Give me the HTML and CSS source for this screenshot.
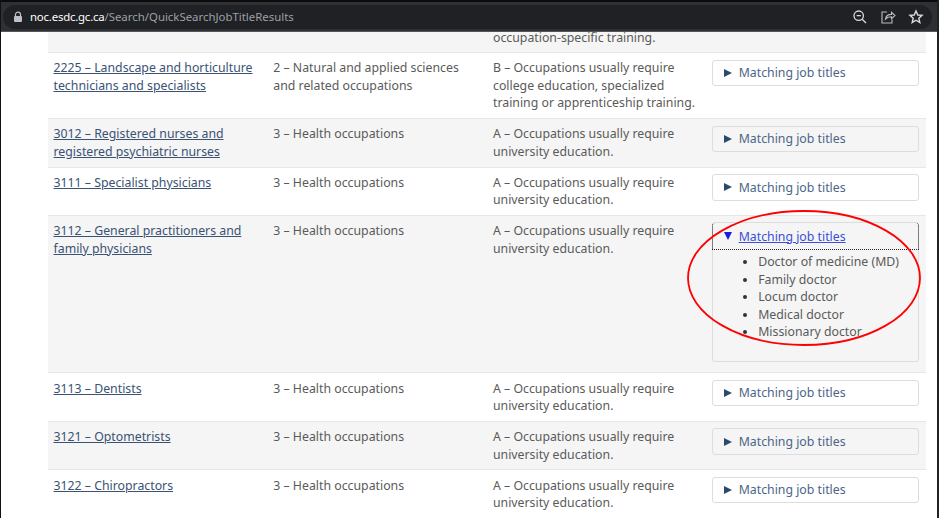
FILE: index.html
```html
<!DOCTYPE html>
<html lang="en">
<head>
<meta charset="utf-8">
<title>Quick search job title results</title>
<link rel="stylesheet" href="styles.css">
</head>
<body>
<div class="frame">
  <header class="bar">
    <div class="omnibox">
      <svg class="lock" width="10" height="12" viewBox="0 0 10 12"><path d="M2.5 5V3.6a2.5 2.5 0 0 1 5 0V5" fill="none" stroke="#bdc1c6" stroke-width="1.2"/><rect x="1" y="5" width="8" height="6" rx="1" fill="#bdc1c6"/></svg>
      <div class="url"><b>noc.esdc.gc.ca</b>/Search/QuickSearchJobTitleResults</div>
      <div class="tools">
        <svg width="16" height="16" viewBox="0 0 16 16" fill="none" stroke="#dadce0" stroke-width="1.3"><circle cx="6.7" cy="6.700" r="4.700"/><path d="M10.200 10.200 14 14M4.600 6.700h4.200"/></svg>
        <svg width="16" height="16" viewBox="0 0 16 16" fill="none" stroke="#b9bcc0" stroke-width="1.100"><path d="M7 3H2v11h10v-3.500"/><path d="M5.500 10c.5-3 2.700-4.600 6-4.600V3.300L15 6.500l-3.500 3.200V7.700c-2.500 0-4.500.7-6 2.300z"/></svg>
        <svg width="16" height="16" viewBox="0 0 16 16" fill="none" stroke="#dadce0" stroke-width="1.400"><path d="m8 2 1.800 4 4.200.4-3.200 2.800 1 4.300L8 11.200l-3.800 2.300 1-4.300L2 6.400 6.200 6z"/></svg>
      </div>
    </div>
  </header>
  <main class="table">
    <div class="row shade clip"><div></div><div></div><div class="cut">occupation-specific training.</div><div></div></div>

    <div class="row">
      <a href="#">2225 – Landscape and horticulture technicians and specialists</a>
      <div>2 – Natural and applied sciences and related occupations</div>
      <div>B – Occupations usually require college education, specialized training or apprenticeship training.</div>
      <div class="box"><span class="tri"></span><span class="sum">Matching job titles</span></div>
    </div>
    <div class="row shade">
      <a href="#">3012 – Registered nurses and registered psychiatric nurses</a>
      <div>3 – Health occupations</div>
      <div>A – Occupations usually require university education.</div>
      <div class="box"><span class="tri"></span><span class="sum">Matching job titles</span></div>
    </div>
    <div class="row">
      <a href="#">3111 – Specialist physicians</a>
      <div>3 – Health occupations</div>
      <div>A – Occupations usually require university education.</div>
      <div class="box"><span class="tri"></span><span class="sum">Matching job titles</span></div>
    </div>
    <div class="row shade">
      <a href="#">3112 – General practitioners and family physicians</a>
      <div>3 – Health occupations</div>
      <div>A – Occupations usually require university education.</div>
      <div class="box open">
        <div class="head"><span class="tri down"></span><a href="#" class="sum active">Matching job titles</a></div>
        <ul>
          <li>Doctor of medicine (MD)</li>
          <li>Family doctor</li>
          <li>Locum doctor</li>
          <li>Medical doctor</li>
          <li>Missionary doctor</li>
        </ul>
      </div>
    </div>
    <div class="row">
      <a href="#">3113 – Dentists</a>
      <div>3 – Health occupations</div>
      <div>A – Occupations usually require university education.</div>
      <div class="box"><span class="tri"></span><span class="sum">Matching job titles</span></div>
    </div>
    <div class="row shade">
      <a href="#">3121 – Optometrists</a>
      <div>3 – Health occupations</div>
      <div>A – Occupations usually require university education.</div>
      <div class="box"><span class="tri"></span><span class="sum">Matching job titles</span></div>
    </div>
    <div class="row">
      <a href="#">3122 – Chiropractors</a>
      <div>3 – Health occupations</div>
      <div>A – Occupations usually require university education.</div>
      <div class="box"><span class="tri"></span><span class="sum">Matching job titles</span></div>
    </div>
  </main>
  <svg class="circle" width="240" height="140" viewBox="0 0 240 140"><ellipse cx="120" cy="70" rx="116" ry="67" fill="none" stroke="#f00" stroke-width="1.800"/></svg>
</div>
</body>
</html>
```
FILE: styles.css
```css
* { box-sizing: border-box; }
html, body { margin: 0; height: 518px; overflow: hidden; background: #fff; }
body {
  font-family: "Noto Sans", "Open Sans", sans-serif;
  font-size: 12.300px;
  line-height: 17.550px;
  color: #5a5a5a;
}
.frame {
  position: relative;
  height: 518px;
  border-left: 1.500px solid #111;
  border-right: 2px solid #222;
  overflow: hidden;
}
.bar {
  position: relative;
  z-index: 2;
  height: 32px;
  padding: 3px 5.500px 4px 2px;
  background: #2f3033;
  border-top: 2px solid #0b0b0b;
  border-bottom: 1px solid #55565a;
}
.omnibox {
  display: flex;
  align-items: center;
  height: 24px;
  padding: 0 7.500px 0 10px;
  background: #202124;
  border-radius: 12px;
}
.lock { flex: none; }
.url {
  margin-left: 7px;
  font-size: 11.400px;
  color: #9aa0a6;
  flex: 1;
}
.url b { font-weight: 400; color: #fff; letter-spacing: -0.200px; }
.tools { display: flex; gap: 12px; margin-top: -1px; }
.table {
  margin: 0 11px 0 46.500px;
}
.row {
  display: grid;
  grid-template-columns: 219.800px 219.700px 219.200px 1fr;
  padding: 6.300px 7px 6.100px 6px;
  border-bottom: 1px solid #e6e6e6;
}
.row > * { padding-right: 12px; }
.row > .box { padding-right: 0; }
.shade { background: #f5f5f5; }
.clip { height: 21px; padding-top: 0; padding-bottom: 0; }
.cut { margin-top: -3px; }
a { color: #3a5273; text-decoration: underline; }
.box {
  display: flex;
  align-items: center;
  align-self: start;
  height: 26.500px;
  margin-top: 0.250px;
  padding-left: 11px;
  background: #fff;
  border: 1px solid #ddd;
  border-radius: 3px;
  color: #4b6687;
}
.shade .box { background: #f5f5f5; }
.tri {
  flex: none;
  width: 0;
  height: 0;
  margin-right: 6.500px;
  border-left: 8px solid #2a4a6b;
  border-top: 4px solid transparent;
  border-bottom: 4px solid transparent;
}
.tri.down {
  margin-right: 6.500px;
  border-top: 8px solid #1a1ae0;
  border-left: 4.500px solid transparent;
  border-right: 4.500px solid transparent;
  border-bottom: 0;
}
.sum { white-space: nowrap; }
.active { color: #3a4fd8; }
.box.open {
  display: block;
  height: 140px;
  margin-top: 0;
  margin-bottom: 4px;
  padding: 0;
  color: #5a5a5a;
}
.head {
  display: flex;
  align-items: center;
  height: 27px;
  padding-left: 11px;
  border: 1px dotted #222;
  border-top: 0;
  margin: 0 -1px;
  border-radius: 3px 3px 0 0;
}
.box ul { margin: 3px 0 0; padding: 0 0 0 45px; }
.box li::marker { color: #333; }
.circle { position: absolute; left: 682.500px; top: 208px; z-index: 3; pointer-events: none; }
```
